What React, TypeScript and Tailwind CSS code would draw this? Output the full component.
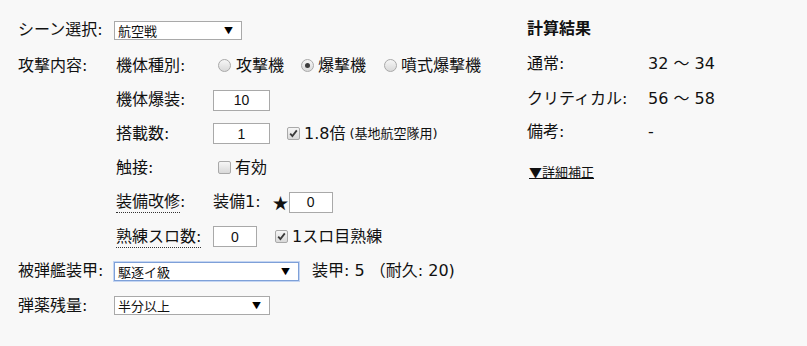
import React from "react";

const Radio = ({ checked = false }: { checked?: boolean }) => (
  <span className="w-[13px] h-[13px] rounded-full border border-[#a9a9a9] bg-linear-to-b from-[#f6f6f6] to-[#d9d9d9] flex items-center justify-center shrink-0">
    {checked && <span className="w-[5px] h-[5px] rounded-full bg-[#3c3c3c]" />}
  </span>
);

const Check = ({ checked = false }: { checked?: boolean }) => (
  <span className="w-[13px] h-[13px] rounded-[2px] border border-[#a9a9a9] bg-linear-to-b from-[#f6f6f6] to-[#d9d9d9] flex items-center justify-center shrink-0">
    {checked && (
      <svg width="9" height="9" viewBox="0 0 9 9">
        <path d="M1.2 4.6 L3.4 7 L7.8 1.4" fill="none" stroke="#3a3a3a" strokeWidth="1.8" />
      </svg>
    )}
  </span>
);

const Select = ({ text, w, focus = false }: { text: string; w: string; focus?: boolean }) => (
  <div
    className={`${w} h-[19px] bg-white flex items-center justify-between pl-[3px] pr-[8px] text-[13px] leading-none ${
      focus ? "border border-[#7ea0d8] shadow-[0_0_0_1px_#c4d5f2]" : "border border-[#a9a9a9]"
    }`}
    style={{ fontFamily: '"Noto Sans CJK JP", sans-serif' }}
  >
    <span>{text}</span>
    <span className="text-[9px] text-black">▼</span>
  </div>
);

const Box = ({ v, w }: { v: string; w: string }) => (
  <div
    className={`${w} h-[21px] bg-white border border-[#a9a9a9] flex items-center justify-center text-[14px] leading-none`}
    style={{ fontFamily: '"Liberation Sans", Arial, sans-serif' }}
  >
    {v}
  </div>
);

export default function App() {
  return (
    <div
      className="w-[807px] h-[346px] bg-[#f8f8f8] text-[#111] text-[16px] flex overflow-hidden"
      style={{ fontFamily: '"DejaVu Sans", "Noto Sans CJK JP", sans-serif' }}
    >
      {/* left */}
      <div className="w-[527px] pl-[18px] pt-[12px] flex flex-col">
        <div className="flex items-center h-[36px]">
          <span className="w-[96px]">シーン選択:</span>
          <Select text="航空戦" w="w-[128px]" />
        </div>
        <div className="flex">
          <div className="w-[98px] h-[35px] flex items-center">攻撃内容:</div>
          <div className="flex flex-col">
            <div className="flex items-center h-[35px]">
              <span className="w-[97px]">機体種別:</span>
              <div className="flex items-center">
                <span className="ml-[5px] mr-[5px]"><Radio /></span>
                <span>攻撃機</span>
                <span className="ml-[17px] mr-[4px]"><Radio checked /></span>
                <span>爆撃機</span>
                <span className="ml-[18px] mr-[4px]"><Radio /></span>
                <span>噴式爆撃機</span>
              </div>
            </div>
            <div className="flex items-center h-[34px]">
              <span className="w-[97px]">機体爆装:</span>
              <Box v="10" w="w-[57px]" />
            </div>
            <div className="flex items-center h-[33px]">
              <span className="w-[97px]">搭載数:</span>
              <Box v="1" w="w-[57px]" />
              <span className="ml-[17px] mr-[4px]"><Check checked /></span>
              <span>1.8倍</span>
              <span className="text-[13px] ml-[4px]">(基地航空隊用)</span>
            </div>
            <div className="flex items-center h-[35px]">
              <span className="w-[97px]">触接:</span>
              <span className="ml-[5px] mr-[4px]"><Check /></span>
              <span>有効</span>
            </div>
            <div className="flex items-center h-[34px]">
              <span className="w-[97px]">
                <span className="border-b border-dotted border-[#333] pb-[1px]">装備改修</span>:
              </span>
              <span>装備1:</span>
              <span className="ml-[12px]" style={{ fontFamily: '"Noto Sans CJK JP", sans-serif' }}>★</span>
              <Box v="0" w="w-[44px]" />
            </div>
            <div className="flex items-center h-[35px]">
              <span className="w-[97px]">
                <span className="border-b border-dotted border-[#333] pb-[1px]">熟練スロ数:</span>
              </span>
              <Box v="0" w="w-[44px]" />
              <span className="ml-[18px] mr-[4px]"><Check checked /></span>
              <span>1スロ目熟練</span>
            </div>
          </div>
        </div>
        <div className="flex items-center h-[34px]">
          <span className="w-[96px]">被弾艦装甲:</span>
          <Select text="駆逐イ級" w="w-[185px]" focus />
          <span className="ml-[13px]">装甲: 5 （耐久: 20)</span>
        </div>
        <div className="flex items-center h-[35px]">
          <span className="w-[96px]">弾薬残量:</span>
          <Select text="半分以上" w="w-[156px]" />
        </div>
      </div>

      {/* right */}
      <div className="flex flex-col pt-[12px]">
        <div className="h-[34px] flex items-center font-bold">計算結果</div>
        <div className="h-[36px] flex items-center">
          <span className="w-[121px]">通常:</span>
          <span>32 ～ 34</span>
        </div>
        <div className="h-[34px] flex items-center">
          <span className="w-[121px]">クリティカル:</span>
          <span>56 ～ 58</span>
        </div>
        <div className="h-[32px] flex items-center">
          <span className="w-[121px]">備考:</span>
          <span>-</span>
        </div>
        <div className="mt-[12px] h-[24px] flex items-center">
          <span className="text-[13px] underline pl-[2px]" style={{ fontFamily: '"Noto Sans CJK JP", sans-serif' }}>▼詳細補正</span>
        </div>
      </div>
    </div>
  );
}
